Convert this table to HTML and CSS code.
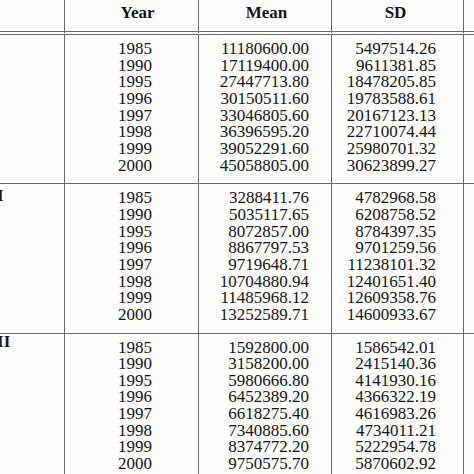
FILE: index.html
```html
<!DOCTYPE html>
<html>
<head>
<meta charset="utf-8">
<link rel="stylesheet" href="styles.css">
</head>
<body>
<table class="stats">
  <colgroup>
    <col class="col-label">
    <col class="col-year">
    <col class="col-mean">
    <col class="col-sd">
    <col class="col-pad">
  </colgroup>
  <thead>
    <tr>
      <th class="label"></th>
      <th class="year">Year</th>
      <th class="mean">Mean</th>
      <th class="sd">SD</th>
      <th class="pad"></th>
    </tr>
  </thead>
  <tbody class="section">
    <tr><td class="label"></td><td class="year">1985</td><td class="mean">11180600.00</td><td class="sd">5497514.26</td><td class="pad"></td></tr>
    <tr><td class="label"></td><td class="year">1990</td><td class="mean">17119400.00</td><td class="sd">9611381.85</td><td class="pad"></td></tr>
    <tr><td class="label"></td><td class="year">1995</td><td class="mean">27447713.80</td><td class="sd">18478205.85</td><td class="pad"></td></tr>
    <tr><td class="label"></td><td class="year">1996</td><td class="mean">30150511.60</td><td class="sd">19783588.61</td><td class="pad"></td></tr>
    <tr><td class="label"></td><td class="year">1997</td><td class="mean">33046805.60</td><td class="sd">20167123.13</td><td class="pad"></td></tr>
    <tr><td class="label"></td><td class="year">1998</td><td class="mean">36396595.20</td><td class="sd">22710074.44</td><td class="pad"></td></tr>
    <tr><td class="label"></td><td class="year">1999</td><td class="mean">39052291.60</td><td class="sd">25980701.32</td><td class="pad"></td></tr>
    <tr><td class="label"></td><td class="year">2000</td><td class="mean">45058805.00</td><td class="sd">30623899.27</td><td class="pad"></td></tr>
  </tbody>
  <tbody class="section">
    <tr><td class="label label-two">II</td><td class="year">1985</td><td class="mean">3288411.76</td><td class="sd">4782968.58</td><td class="pad"></td></tr>
    <tr><td class="label"></td><td class="year">1990</td><td class="mean">5035117.65</td><td class="sd">6208758.52</td><td class="pad"></td></tr>
    <tr><td class="label"></td><td class="year">1995</td><td class="mean">8072857.00</td><td class="sd">8784397.35</td><td class="pad"></td></tr>
    <tr><td class="label"></td><td class="year">1996</td><td class="mean">8867797.53</td><td class="sd">9701259.56</td><td class="pad"></td></tr>
    <tr><td class="label"></td><td class="year">1997</td><td class="mean">9719648.71</td><td class="sd">11238101.32</td><td class="pad"></td></tr>
    <tr><td class="label"></td><td class="year">1998</td><td class="mean">10704880.94</td><td class="sd">12401651.40</td><td class="pad"></td></tr>
    <tr><td class="label"></td><td class="year">1999</td><td class="mean">11485968.12</td><td class="sd">12609358.76</td><td class="pad"></td></tr>
    <tr><td class="label"></td><td class="year">2000</td><td class="mean">13252589.71</td><td class="sd">14600933.67</td><td class="pad"></td></tr>
  </tbody>
  <tbody class="section">
    <tr><td class="label label-three">III</td><td class="year">1985</td><td class="mean">1592800.00</td><td class="sd">1586542.01</td><td class="pad"></td></tr>
    <tr><td class="label"></td><td class="year">1990</td><td class="mean">3158200.00</td><td class="sd">2415140.36</td><td class="pad"></td></tr>
    <tr><td class="label"></td><td class="year">1995</td><td class="mean">5980666.80</td><td class="sd">4141930.16</td><td class="pad"></td></tr>
    <tr><td class="label"></td><td class="year">1996</td><td class="mean">6452389.20</td><td class="sd">4366322.19</td><td class="pad"></td></tr>
    <tr><td class="label"></td><td class="year">1997</td><td class="mean">6618275.40</td><td class="sd">4616983.26</td><td class="pad"></td></tr>
    <tr><td class="label"></td><td class="year">1998</td><td class="mean">7340885.60</td><td class="sd">4734011.21</td><td class="pad"></td></tr>
    <tr><td class="label"></td><td class="year">1999</td><td class="mean">8374772.20</td><td class="sd">5222954.78</td><td class="pad"></td></tr>
    <tr><td class="label"></td><td class="year">2000</td><td class="mean">9750575.70</td><td class="sd">5870602.92</td><td class="pad"></td></tr>
  </tbody>
</table>
</body>
</html>
```

FILE: styles.css
```css
html, body {
  margin: 0;
  padding: 0;
  background: #fdfdfc;
  overflow: hidden;
}

.stats {
  table-layout: fixed;
  border-collapse: separate;
  border-spacing: 0;
  width: 474px;
  font-family: "Liberation Serif", "Times New Roman", serif;
  font-size: 17px;
  color: #141414;
}

.col-label { width: 64px; }
.col-year { width: 134px; }
.col-mean { width: 133px; }
.col-sd { width: 132px; }
.col-pad { width: 11px; }

.stats th,
.stats td {
  box-sizing: border-box;
  padding: 0;
  vertical-align: top;
  white-space: nowrap;
}

.stats th.year,
.stats th.mean,
.stats th.sd,
.stats th.pad,
.stats td.year,
.stats td.mean,
.stats td.sd,
.stats td.pad {
  border-left: 1px solid #6a6a6a;
}

.stats th {
  height: 35px;
  font-weight: bold;
  line-height: 17px;
  padding-top: 4px;
  padding-bottom: 10px;
  text-align: center;
  border-bottom: 4px double #6a6a6a;
}

.stats th.year { padding-left: 12px; }
.stats th.mean { padding-left: 3px; }
.stats th.sd { padding-right: 4px; }

.stats td {
  line-height: 16.65px;
  text-align: right;
}

.stats td.year { padding-right: 46px; }
.stats td.mean { padding-right: 22px; }
.stats td.sd { padding-right: 27px; }

.section tr:first-child td { padding-top: 6px; }
.section tr:last-child td {
  padding-bottom: 9px;
  border-bottom: 1px solid #6a6a6a;
}

.stats td.label {
  text-align: left;
  font-weight: bold;
  text-indent: -9.5px;
  overflow: visible;
}

.section tr:first-child td.label-two { padding-top: 4px; }
.section tr:first-child td.label-three { padding-top: 0; }
```
